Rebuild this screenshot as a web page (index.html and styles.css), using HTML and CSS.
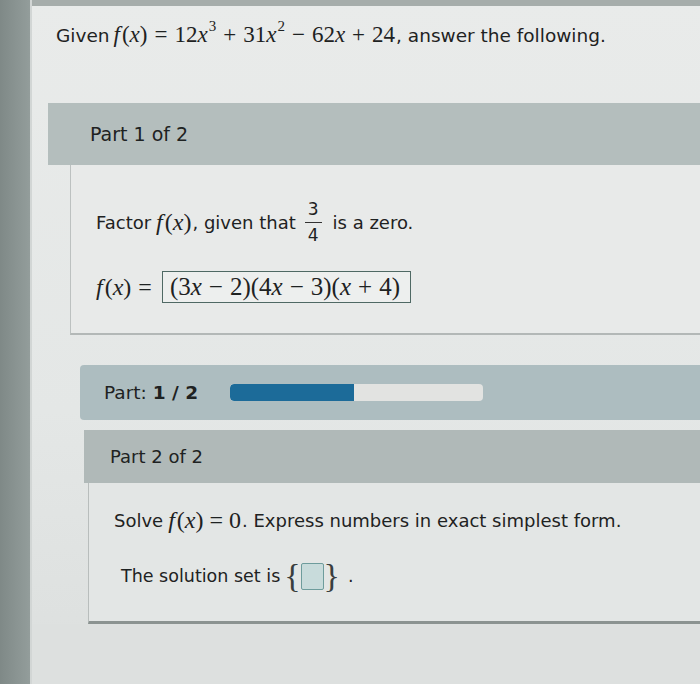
FILE: index.html
```html
<!DOCTYPE html>
<html>
<head>
<meta charset="utf-8">
<link rel="stylesheet" href="styles.css">
</head>
<body>
<div class="screen">
  <div class="side"></div>
  <div class="main">
    <div class="topstrip"></div>
    <div class="question">
      <span class="txt">Given</span>
      <span class="math"><i class="f">f</i>(<i>x</i>)<span class="op">=</span>12<i>x</i><sup>3</sup><span class="op">+</span>31<i>x</i><sup>2</sup><span class="op">−</span>62<i>x</i><span class="op">+</span>24</span><span class="txt">, answer the following.</span>
    </div>

    <div class="part1head">Part 1 of 2</div>
    <div class="part1body">
      <div class="row factor">
        <span class="txt">Factor</span>
        <span class="math"><i class="f">f</i>(<i>x</i>)</span><span class="txt">, given that</span>
        <span class="frac"><span class="num">3</span><span class="den">4</span></span>
        <span class="txt">is a zero.</span>
      </div>
      <div class="row answer">
        <span class="math lhs"><i class="f">f</i>(<i>x</i>)<span class="op">=</span></span>
        <span class="ansbox math">(3<i>x</i><span class="op">−</span>2)(4<i>x</i><span class="op">−</span>3)(<i>x</i><span class="op">+</span>4)</span>
      </div>
    </div>

    <div class="progress">
      <span class="ptxt">Part: <b>1 / 2</b></span>
      <div class="track"><div class="fill" style="width:49%"></div></div>
    </div>

    <div class="part2head">Part 2 of 2</div>
    <div class="part2body">
      <div class="row solve">
        <span class="txt">Solve</span>
        <span class="math"><i class="f">f</i>(<i>x</i>)<span class="op">=</span>0</span><span class="txt">. Express numbers in exact simplest form.</span>
      </div>
      <div class="row sol">
        <span class="txt">The solution set is</span>
        <span class="set"><span class="brace">{</span><span class="slot"></span><span class="brace">}</span></span><span class="txt dot">.</span>
      </div>
    </div>
    <div class="bottom"></div>
  </div>
</div>
</body>
</html>
```

FILE: styles.css
```css
html, body {
  margin: 0;
  padding: 0;
}
body {
  width: 700px;
  height: 684px;
  overflow: hidden;
  background: #dcdfde;
  font-family: "DejaVu Sans", Verdana, sans-serif;
  color: #1e2222;
}
.screen {
  display: flex;
  height: 684px;
}
.side {
  width: 30px;
  flex: none;
  background: linear-gradient(90deg, #7f8987, #939d9b);
}
.main {
  flex: 1;
  display: flex;
  flex-direction: column;
  background: linear-gradient(180deg, #e9ebea 0%, #e4e7e6 60%, #dcdfde 100%);
  border-left: 2px solid #d2d6d5;
}
.topstrip {
  height: 6px;
  background: #a6adab;
}
.txt {
  font-family: "DejaVu Sans", Verdana, sans-serif;
  font-size: 18px;
}
.math {
  font-family: "Liberation Serif", "Times New Roman", serif;
  font-size: 24px;
}
.math .f {
  margin-right: 2px;
}
.math .op {
  margin: 0 6px;
}
.math sup {
  font-size: 15px;
  vertical-align: 11px;
  line-height: 0;
  margin-left: 1px;
}
.question {
  padding: 16px 0 0 24px;
  height: 81px;
  box-sizing: border-box;
  display: flex;
  align-items: baseline;
  gap: 4px;
  white-space: nowrap;
}
.question .math { font-size: 23px; }
.question .math .op { margin: 0 7px; }
.question .txt { font-size: 18.5px; }
.question .math + .txt { margin-left: -3px; }
.part1head {
  margin-top: 16px;
  margin-left: 16px;
  height: 62px;
  background: #b4bebd;
  display: flex;
  align-items: center;
  padding-left: 42px;
  font-size: 19px;
}
.part1body {
  margin-left: 38px;
  height: 170px;
  border-left: 1px solid #bcc1c0;
  border-bottom: 2px solid #b3b8b7;
  background: #e8eae9;
  padding-left: 25px;
  box-sizing: border-box;
}
.row {
  display: flex;
  align-items: center;
  gap: 5px;
  white-space: nowrap;
}
.factor {
  height: 54px;
  margin-top: 30px;
}
.factor .math + .txt { margin-left: -4px; }
.frac {
  display: inline-flex;
  flex-direction: column;
  align-items: center;
  font-size: 17px;
  line-height: 21px;
  margin: 0 6px 0 4px;
}
.frac .num {
  border-bottom: 1.5px solid #333;
  padding: 0 3px 2px;
}
.frac .den {
  padding-top: 2px;
}
.answer {
  margin-top: 22px;
}
.lhs .op { margin: 0 5px 0 7px; }
.ansbox {
  border: 1.5px solid #4f6964;
  background: #edefee;
  padding: 0 10px 0 7px;
  height: 30px;
  line-height: 30px;
  margin-left: 0;
  font-size: 25px;
}
.ansbox .op { margin: 0 7px; }
.progress {
  margin: 30px 0 0 48px;
  height: 55px;
  background: #adbdc0;
  border-radius: 4px 0 0 4px;
  display: flex;
  align-items: center;
  padding-left: 24px;
  gap: 32px;
}
.ptxt {
  font-size: 18.5px;
}
.track {
  width: 253px;
  height: 17px;
  background: #e2e3e1;
  border-radius: 4px;
  overflow: hidden;
}
.fill {
  height: 100%;
  background: #1c6b99;
  border-radius: 4px 0 0 4px;
}
.part2head {
  margin: 10px 0 0 52px;
  height: 53px;
  background: #b0b9b8;
  display: flex;
  align-items: center;
  padding-left: 26px;
  font-size: 18px;
}
.part2body {
  margin-left: 56px;
  height: 141px;
  border-left: 1px solid #b8bdbc;
  border-bottom: 3px solid #8b9391;
  background: #e3e6e5;
  padding-left: 25px;
  box-sizing: border-box;
}
.solve {
  margin-top: 22px;
  height: 30px;
}
.solve .txt { font-size: 18px; }
.solve .math + .txt { margin-left: -4px; }
.sol {
  margin-top: 24px;
  padding-left: 7px;
  gap: 4px;
}
.sol .txt { font-size: 17.5px; }
.set {
  display: inline-flex;
  align-items: center;
  gap: 0;
}
.brace {
  font-family: "Liberation Serif", serif;
  font-size: 34px;
  line-height: 34px;
  color: #3a3e3e;
}
.slot {
  width: 21px;
  height: 25px;
  border: 1.5px solid #6e9c9c;
  background: #c8dbdb;
  border-radius: 2px;
}
.dot {
  margin-left: 4px;
}
.bottom {
  flex: 1;
  background: #dde0df;
}
```
